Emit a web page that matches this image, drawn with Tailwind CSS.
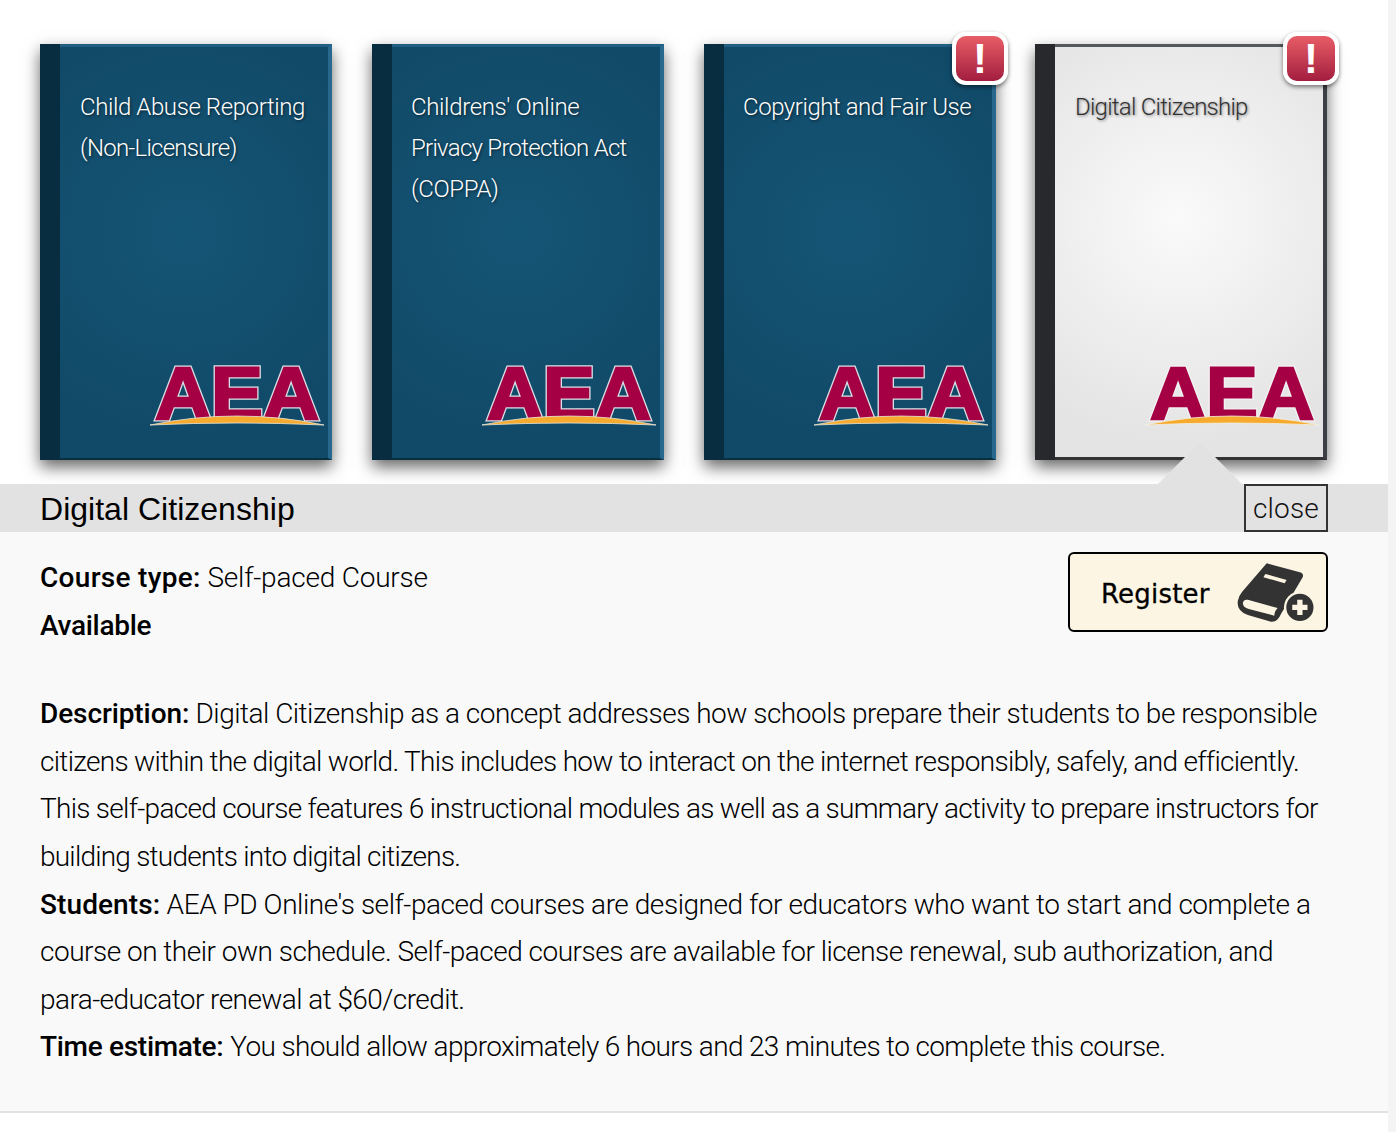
<!DOCTYPE html>
<html lang="en">
<head>
  <meta charset="UTF-8">
  <title>Digital Citizenship</title>
  <script src="https://cdn.jsdelivr.net/npm/@tailwindcss/browser@4"></script>
</head>
<body class="bg-white text-black font-['Roboto',sans-serif] font-light">
  <div class="flex h-[1132px] overflow-hidden">
    <main class="w-[1388px]">

      <!-- Book row -->
      <section class="flex gap-10 px-10 pt-11 pb-6 h-[484px]">
        <!-- Book 1 -->
        <article class="relative w-[292px] h-[416px] shrink-0 flex border-t-[3px] border-r-4 border-b-2 border-t-[#1f6082] border-r-[#28688f] border-b-[#08303f] bg-[radial-gradient(circle_at_50%_45%,#155575,#114a69_75%)] shadow-[0_7px_15px_rgba(0,0,0,0.6)]">
          <div class="w-5 -mt-[3px] -mb-0.5 bg-[#082d40] shrink-0"></div>
          <h3 class="pl-5 pt-10 w-[250px] text-2xl leading-[40.8px] font-light text-white [text-shadow:1px_1px_3px_rgba(0,0,0,0.6)]"><span class="block tracking-[-0.4px]">Child Abuse Reporting</span><span class="block tracking-[-0.75px]">(Non-Licensure)</span></h3>
          <svg class="absolute left-[110px] top-[318px] w-[174px] h-[62px] overflow-visible" viewBox="0 0 174 62">
            <text x="5" y="54" textLength="164" lengthAdjust="spacingAndGlyphs" font-family="Liberation Sans" font-weight="700" font-size="74" fill="none" stroke="#d9dfe3" stroke-width="5">AEA</text>
            <text x="5" y="54" textLength="164" lengthAdjust="spacingAndGlyphs" font-family="Liberation Sans" font-weight="700" font-size="74" fill="#a50044" stroke="#a50044" stroke-width="2.5">AEA</text>
            <path d="M0 60 Q87 42 174 60 Q87 56 0 60Z" fill="#f7ab2e" stroke="#e8e6d8" stroke-width="0.8"/>
          </svg>
        </article>

        <!-- Book 2 -->
        <article class="relative w-[292px] h-[416px] shrink-0 flex border-t-[3px] border-r-4 border-b-2 border-t-[#1f6082] border-r-[#28688f] border-b-[#08303f] bg-[radial-gradient(circle_at_50%_45%,#155575,#114a69_75%)] shadow-[0_7px_15px_rgba(0,0,0,0.6)]">
          <div class="w-5 -mt-[3px] -mb-0.5 bg-[#082d40] shrink-0"></div>
          <h3 class="pl-[19px] pt-10 w-[250px] text-2xl leading-[40.8px] font-light text-white [text-shadow:1px_1px_3px_rgba(0,0,0,0.6)]"><span class="block tracking-[-0.35px]">Childrens' Online</span><span class="block tracking-[-0.72px]">Privacy Protection Act</span><span class="block tracking-[-0.4px]">(COPPA)</span></h3>
          <svg class="absolute left-[110px] top-[318px] w-[174px] h-[62px] overflow-visible" viewBox="0 0 174 62">
            <text x="5" y="54" textLength="164" lengthAdjust="spacingAndGlyphs" font-family="Liberation Sans" font-weight="700" font-size="74" fill="none" stroke="#d9dfe3" stroke-width="5">AEA</text>
            <text x="5" y="54" textLength="164" lengthAdjust="spacingAndGlyphs" font-family="Liberation Sans" font-weight="700" font-size="74" fill="#a50044" stroke="#a50044" stroke-width="2.5">AEA</text>
            <path d="M0 60 Q87 42 174 60 Q87 56 0 60Z" fill="#f7ab2e" stroke="#e8e6d8" stroke-width="0.8"/>
          </svg>
        </article>

        <!-- Book 3 -->
        <article class="relative w-[292px] h-[416px] shrink-0 flex border-t-[3px] border-r-4 border-b-2 border-t-[#1f6082] border-r-[#28688f] border-b-[#08303f] bg-[radial-gradient(circle_at_50%_45%,#155575,#114a69_75%)] shadow-[0_7px_15px_rgba(0,0,0,0.6)]">
          <div class="w-5 -mt-[3px] -mb-0.5 bg-[#082d40] shrink-0"></div>
          <h3 class="pl-[19px] pt-10 w-[250px] text-2xl leading-[40.8px] font-light tracking-[-0.45px] text-white [text-shadow:1px_1px_3px_rgba(0,0,0,0.6)]">Copyright and Fair Use</h3>
          <svg class="absolute left-[110px] top-[318px] w-[174px] h-[62px] overflow-visible" viewBox="0 0 174 62">
            <text x="5" y="54" textLength="164" lengthAdjust="spacingAndGlyphs" font-family="Liberation Sans" font-weight="700" font-size="74" fill="none" stroke="#d9dfe3" stroke-width="5">AEA</text>
            <text x="5" y="54" textLength="164" lengthAdjust="spacingAndGlyphs" font-family="Liberation Sans" font-weight="700" font-size="74" fill="#a50044" stroke="#a50044" stroke-width="2.5">AEA</text>
            <path d="M0 60 Q87 42 174 60 Q87 56 0 60Z" fill="#f7ab2e" stroke="#e8e6d8" stroke-width="0.8"/>
          </svg>
          <div class="absolute -top-[15px] -right-4 w-[56px] h-[53px] rounded-[14px] border-4 border-white bg-gradient-to-b from-[#e85c66] to-[#a31c3f] shadow-[0_2px_4px_rgba(0,0,0,0.5)] flex items-center justify-center text-white font-['Liberation_Sans',sans-serif] font-bold text-[42px] leading-none">!</div>
        </article>

        <!-- Book 4, selected -->
        <article class="relative -ml-px w-[292px] h-[416px] shrink-0 flex border-t-[3px] border-r-4 border-b-[3px] border-t-[#55585c] border-r-[#3c3f44] border-b-[#333] bg-[radial-gradient(circle_at_50%_42%,#fafafa,#e4e4e4_80%)] shadow-[0_7px_15px_rgba(0,0,0,0.6)]">
          <div class="w-5 -mt-[3px] -mb-[3px] bg-[#27292c] shrink-0"></div>
          <h3 class="pl-5 pt-10 w-[250px] text-2xl leading-[40.8px] font-light tracking-[-0.75px] text-[#333] [text-shadow:1px_1px_3px_rgba(0,0,0,0.45)]">Digital Citizenship</h3>
          <svg class="absolute left-[110px] top-[318px] w-[174px] h-[62px] overflow-visible" viewBox="0 0 174 62">
            <text x="5" y="54" textLength="164" lengthAdjust="spacingAndGlyphs" font-family="Liberation Sans" font-weight="700" font-size="74" fill="none" stroke="#f2f2f2" stroke-width="5">AEA</text>
            <text x="5" y="54" textLength="164" lengthAdjust="spacingAndGlyphs" font-family="Liberation Sans" font-weight="700" font-size="74" fill="#a50044" stroke="#a50044" stroke-width="2.5">AEA</text>
            <path d="M0 60 Q87 42 174 60 Q87 56 0 60Z" fill="#f7ab2e" stroke="#f2f0e4" stroke-width="0.8"/>
          </svg>
          <div class="absolute -top-[15px] -right-4 w-[56px] h-[53px] rounded-[14px] border-4 border-white bg-gradient-to-b from-[#e85c66] to-[#a31c3f] shadow-[0_2px_4px_rgba(0,0,0,0.5)] flex items-center justify-center text-white font-['Liberation_Sans',sans-serif] font-bold text-[42px] leading-none">!</div>
        </article>
      </section>

      <!-- Title bar -->
      <header class="relative flex justify-between items-center h-12 pl-10 pr-[60px] bg-[#e2e2e2]">
        <div class="absolute left-[1158px] -top-[42px] w-0 h-0 border-x-[42px] border-b-[42px] border-x-transparent border-b-[#e2e2e2]"></div>
        <h2 class="pt-0.5 text-[32px] font-normal font-['Liberation_Sans',sans-serif] tracking-[0.02px]">Digital Citizenship</h2>
        <button class="pt-0.5 h-12 w-[84px] border-2 border-[#333] text-[28px] font-light tracking-[0.2px] text-[#111]">close</button>
      </header>

      <!-- Details -->
      <section class="relative bg-[#f9f9f9] border-b-2 border-[#e2e2e2] px-10 pt-[22px] h-[581px] text-[28px] leading-[47.6px] whitespace-nowrap">
        <button class="absolute right-[60px] top-5 w-[260px] h-20 flex items-center justify-between pl-[31px] pr-2.5 bg-[#fdf5e3] border-2 border-black rounded-md">
          <span class="pt-1.5 font-['DejaVu_Sans',sans-serif] font-normal text-[26px] tracking-[0.2px] text-black [-webkit-text-stroke:0.3px_black]">Register</span>
          <svg class="w-[80px] h-[63px]" viewBox="530 45 240 190">
            <path d="M622 52 L725 80 Q735 85 730 95 L665 205 Q655 230 635 228 L565 208 Q530 195 535 165 Q538 150 548 138 Z" fill="#333"/>
            <path d="M550 172 Q552 160 565 162 L655 187 Q645 197 645 210 L568 190 Q550 185 550 172Z" fill="#fdf5e3"/>
            <path d="M618 84 L682 102 L676 112 L612 94Z" fill="#fdf5e3"/>
            <circle cx="722" cy="185" r="48" fill="#fdf5e3"/>
            <circle cx="722" cy="185" r="41" fill="#333"/>
            <path d="M714 162 h16 v15 h15 v16 h-15 v15 h-16 v-15 h-15 v-16 h15z" fill="#fdf5e3"/>
          </svg>
        </button>
        <p class="tracking-[-0.2px]"><strong class="font-medium tracking-[0.3px]">Course type:</strong> Self-paced Course</p>
        <p class="font-medium tracking-[-0.3px]">Available</p>
        <div class="mt-[41px]">
          <p>
            <span class="block tracking-[-0.5px]"><strong class="font-medium tracking-[-0.1px]">Description:</strong> Digital Citizenship as a concept addresses how schools prepare their students to be responsible</span>
            <span class="block tracking-[-0.69px]">citizens within the digital world. This includes how to interact on the internet responsibly, safely, and efficiently.</span>
            <span class="block tracking-[-0.71px]">This self-paced course features 6 instructional modules as well as a summary activity to prepare instructors for</span>
            <span class="block tracking-[-0.77px]">building students into digital citizens.</span>
          </p>
          <p>
            <span class="block tracking-[-0.45px]"><strong class="font-medium tracking-[0.1px]">Students:</strong> AEA PD Online's self-paced courses are designed for educators who want to start and complete a</span>
            <span class="block tracking-[-0.5px]">course on their own schedule. Self-paced courses are available for license renewal, sub authorization, and</span>
            <span class="block tracking-[-0.57px]">para-educator renewal at $60/credit.</span>
          </p>
          <p><strong class="font-medium tracking-[-0.3px]">Time estimate:</strong> <span class="tracking-[-0.65px]">You should allow approximately 6 hours and 23 minutes to complete this course.</span></p>
        </div>
      </section>
    </main>

    <!-- Scrollbar track -->
    <aside class="w-2 bg-[#f4f4f4]"></aside>
  </div>
</body>
</html>
